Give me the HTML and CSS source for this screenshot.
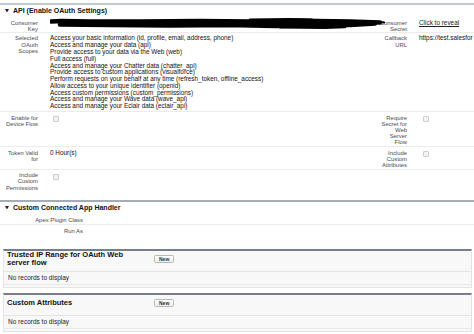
FILE: index.html
```html
<!DOCTYPE html>
<html>
<head>
<meta charset="utf-8">
<link rel="stylesheet" href="styles.css">
</head>
<body>
<section class="sect sect-first">
  <div class="sect-head">
    <svg class="tri" viewBox="0 0 4 3.5"><path d="M0 0H4L2 3.5Z" fill="#222"/></svg>
    <h3 class="sect-title">API (Enable OAuth Settings)</h3>
  </div>
  <div class="row row-key">
    <div class="lbl">Consumer<br>Key</div>
    <div class="val redact-cell">
      <svg class="redact" viewBox="0 0 336 13" width="336" height="13">
        <g fill="none" stroke="#000" stroke-linecap="round" stroke-linejoin="round">
          <path d="M1 4.5 L12 4 L40 4.5 L90 4.5 L150 4 L200 4.5 L250 3.8 L300 4.5 L330 5.5" stroke-width="4.4"/>
          <path d="M10 7.5 L60 8 L120 8.5 L180 8 L225 9 L260 8.5 L300 8 L325 6.5" stroke-width="4.6"/>
          <path d="M40 6 L130 6.5 L210 6.5 L270 6 L315 6" stroke-width="3.5"/>
          <path d="M200 3 L240 2.4 L262 3" stroke-width="2.8"/>
          <path d="M230 10.2 L275 10.8 L295 10" stroke-width="2.6"/>
          <path d="M300 4.5 L325 5 L334 5.5" stroke-width="2.2"/>
        </g>
      </svg>
    </div>
    <div class="lbl">Consumer<br>Secret</div>
    <div class="val"><a class="reveal" href="#">Click to reveal</a></div>
  </div>
  <div class="row row-scopes">
    <div class="lbl">Selected<br>OAuth<br>Scopes</div>
    <div class="val">
      <div>Access your basic information (id, profile, email, address, phone)</div>
      <div>Access and manage your data (api)</div>
      <div>Provide access to your data via the Web (web)</div>
      <div>Full access (full)</div>
      <div>Access and manage your Chatter data (chatter_api)</div>
      <div>Provide access to custom applications (visualforce)</div>
      <div>Perform requests on your behalf at any time (refresh_token, offline_access)</div>
      <div>Allow access to your unique identifier (openid)</div>
      <div>Access custom permissions (custom_permissions)</div>
      <div>Access and manage your Wave data (wave_api)</div>
      <div>Access and manage your Eclair data (eclair_api)</div>
    </div>
    <div class="lbl">Callback<br>URL</div>
    <div class="val nowrap">https://test.salesfor</div>
  </div>
  <div class="row">
    <div class="lbl">Enable for<br>Device Flow</div>
    <div class="val"><span class="cb"></span></div>
    <div class="lbl">Require<br>Secret for<br>Web<br>Server<br>Flow</div>
    <div class="val"><span class="cb cb-r"></span></div>
  </div>
  <div class="row">
    <div class="lbl">Token Valid<br>for</div>
    <div class="val">0 Hour(s)</div>
    <div class="lbl">Include<br>Custom<br>Attributes</div>
    <div class="val"><span class="cb cb-r"></span></div>
  </div>
  <div class="row row-last">
    <div class="lbl">Include<br>Custom<br>Permissions</div>
    <div class="val"><span class="cb"></span></div>
    <div class="lbl"></div>
    <div class="val"></div>
  </div>
</section>

<section class="sect sect-handler">
  <div class="sect-head">
    <svg class="tri" viewBox="0 0 4 3.5"><path d="M0 0H4L2 3.5Z" fill="#222"/></svg>
    <h3 class="sect-title">Custom Connected App Handler</h3>
  </div>
  <div class="row2 row2-first">
    <div class="lbl">Apex Plugin Class</div>
    <div class="val"></div>
  </div>
  <div class="row2 row-last">
    <div class="lbl">Run As</div>
    <div class="val"></div>
  </div>
</section>

<div class="panel">
  <div class="panel-head">
    <h3 class="panel-title">Trusted IP Range for OAuth Web server flow</h3>
    <button class="btn" type="button">New</button>
  </div>
  <div class="norec">No records to display</div>
  <div class="panel-foot"></div>
</div>

<div class="panel panel-second">
  <div class="panel-head">
    <h3 class="panel-title">Custom Attributes</h3>
    <button class="btn" type="button">New</button>
  </div>
  <div class="norec">No records to display</div>
  <div class="panel-foot"></div>
</div>
</body>
</html>
```

FILE: styles.css
```css
* { box-sizing: border-box; }

html, body {
  margin: 0;
  width: 474px;
  height: 334px;
  overflow: hidden;
  background: #fff;
}

body {
  font-family: "Liberation Sans", Arial, sans-serif;
  color: #111;
}

.sect-head {
  display: flex;
  align-items: center;
  gap: 4px;
  padding: 2.5px 0 2.5px 5px;
}

.sect-first .sect-head {
  margin-top: 2.5px;
  border-top: 2px solid #c3c8cd;
}

.tri {
  width: 4px;
  height: 3.5px;
  flex: none;
}

.sect-title {
  margin: 0;
  font-size: 7px;
  line-height: 8px;
  font-weight: bold;
  color: #111;
}

.sect-first {
  padding-bottom: 8.2px;
}

.row {
  display: grid;
  grid-template-columns: 44px minmax(0, 1fr) 40px 61px;
  padding: 2.7px 0 0.8px;
  border-bottom: 1px solid #ececec;
}

.row-key {
  padding: 2.3px 0 0.5px;
}

.row-scopes {
  padding: 2px 0 1px;
}

.row-last {
  border-bottom: none;
}

.lbl {
  text-align: right;
  padding-right: 6px;
  font-size: 5.9px;
  line-height: 6.1px;
  font-weight: normal;
  color: #4a4a56;
}

.val {
  padding-left: 6px;
  font-size: 6.4px;
  line-height: 6.77px;
  color: #111;
  min-width: 0;
}

.nowrap {
  white-space: nowrap;
  overflow: hidden;
}

.redact-cell {
  position: relative;
}

.redact {
  position: absolute;
  left: 6px;
  top: -2.5px;
  display: block;
}

.reveal {
  color: #222;
  text-decoration: underline;
  display: block;
  margin-top: 0.5px;
}

.cb {
  display: block;
  width: 6px;
  height: 6px;
  margin: 1.5px 0 0 3px;
  border: 1px solid #cdcdcd;
  border-radius: 1px;
  background: #f2f2f2;
}

.cb-r {
  margin-left: 4px;
}

.sect-handler {
  margin-bottom: 14.5px;
}

.sect-handler .sect-head {
  border-top: 2px solid #a3adb8;
  padding: 2px 0 2.8px 5px;
}

.row2 {
  display: grid;
  grid-template-columns: 89px minmax(0, 1fr);
  padding: 2.7px 0 0.8px;
  border-bottom: 1px solid #ececec;
}

.row2-first {
  padding: 2.5px 0 1px;
}

.row2.row-last {
  border-bottom: none;
}

.panel {
  margin: 0 2px 0 3px;
  border: 1px solid #e4e4e4;
  border-top: 2px solid #767d8f;
  background: #f8f8f8;
}

.panel-second {
  margin-top: 5.5px;
}

.panel-head {
  display: flex;
  align-items: center;
  height: 20.5px;
  padding-bottom: 3px;
  border-bottom: 1px solid #e4e4e4;
}

.panel-title {
  flex: 0 0 147px;
  margin: 0;
  padding: 0 12px 0 3px;
  font-size: 7.5px;
  line-height: 8.3px;
  font-weight: bold;
  color: #111;
}

.btn {
  height: 8px;
  margin: 0 0 0 3px;
  padding: 0 4px;
  font-family: "Liberation Sans", Arial, sans-serif;
  font-size: 5px;
  line-height: 6px;
  font-weight: bold;
  color: #333;
  border: 1px solid #b8b8b8;
  border-radius: 1.5px;
  background: linear-gradient(#ffffff, #ececec);
}

.norec {
  padding: 2.8px 0 2.2px 4px;
  font-size: 6.5px;
  line-height: 7px;
  color: #222;
  border-bottom: 1px solid #e8e8e8;
}

.panel-foot {
  height: 2px;
}
```
